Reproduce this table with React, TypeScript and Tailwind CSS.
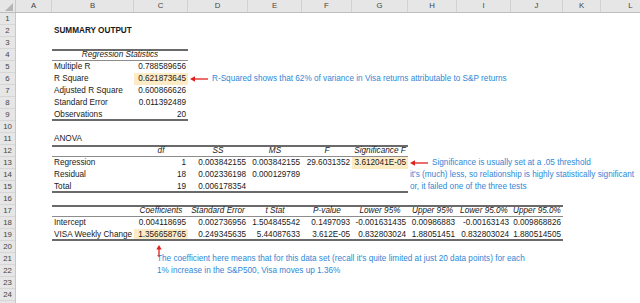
import React from "react";

const W = [36, 82, 54, 60, 54, 50, 56, 49, 54, 52, 38, 60];
const LETTERS = ["A", "B", "C", "D", "E", "F", "G", "H", "I", "J", "K", "L"];

type CellDef = {
  c: number;
  t?: React.ReactNode;
  a?: "l" | "r" | "c";
  i?: boolean;
  b?: boolean;
  hl?: boolean;
  span?: number;
  note?: boolean;
  raw?: boolean;
};

type RowDef = {
  cells?: CellDef[];
  top?: [number, number];
  bot?: [number, number];
};

const LeftArrow = () => (
  <svg width="20" height="8" viewBox="0 0 20 8" className="shrink-0">
    <line x1="5" y1="4" x2="20" y2="4" stroke="#e0201c" strokeWidth="1.3" />
    <polygon points="2,4 7,1.3 7,6.7" fill="#e0201c" />
  </svg>
);

const UpArrow = () => (
  <svg width="8" height="13" viewBox="0 0 8 13">
    <line x1="4" y1="4" x2="4" y2="13" stroke="#e0201c" strokeWidth="1.3" />
    <polygon points="4,1 1.3,5.5 6.7,5.5" fill="#e0201c" />
  </svg>
);

const num = (c: number, t: string, hl?: boolean): CellDef => ({ c, t, a: "r", hl });
const hdr = (c: number, t: string): CellDef => ({ c, t, a: "c", i: true });

const rows: RowDef[] = [
  {},
  { cells: [{ c: 1, t: "SUMMARY OUTPUT", b: true }] },
  {},
  { cells: [{ c: 1, t: "Regression Statistics", a: "c", i: true, span: 2 }], top: [1, 2] },
  { cells: [{ c: 1, t: "Multiple R" }, num(2, "0.788589656")] },
  {
    cells: [
      { c: 1, t: "R Square" },
      num(2, "0.621873645", true),
      {
        c: 3,
        raw: true,
        t: (
          <div className="flex items-center whitespace-nowrap h-full">
            <LeftArrow />
            <span className="ml-[4px] text-[#2f88d6]">
              R-Squared shows that 62% of variance in Visa returns attributable to S&amp;P returns
            </span>
          </div>
        ),
      },
    ],
  },
  { cells: [{ c: 1, t: "Adjusted R Square" }, num(2, "0.600866626")] },
  { cells: [{ c: 1, t: "Standard Error" }, num(2, "0.011392489")] },
  { cells: [{ c: 1, t: "Observations" }, num(2, "20")], bot: [1, 2] },
  {},
  { cells: [{ c: 1, t: "ANOVA" }] },
  {
    cells: [hdr(2, "df"), hdr(3, "SS"), hdr(4, "MS"), hdr(5, "F"), hdr(6, "Significance F")],
    top: [1, 6],
  },
  {
    cells: [
      { c: 1, t: "Regression" },
      num(2, "1"),
      num(3, "0.003842155"),
      num(4, "0.003842155"),
      num(5, "29.6031352"),
      num(6, "3.612041E-05", true),
      {
        c: 7,
        raw: true,
        t: (
          <div className="flex items-center whitespace-nowrap h-full">
            <LeftArrow />
            <span className="ml-[4px] text-[#2f88d6]">Significance is usually set at a .05 threshold</span>
          </div>
        ),
      },
    ],
  },
  {
    cells: [
      { c: 1, t: "Residual" },
      num(2, "18"),
      num(3, "0.002336198"),
      num(4, "0.000129789"),
      { c: 7, t: "it's (much) less, so relationship is highly statistically significant", note: true },
    ],
  },
  {
    cells: [
      { c: 1, t: "Total" },
      num(2, "19"),
      num(3, "0.006178354"),
      { c: 7, t: "or, it failed one of the three tests", note: true },
    ],
    bot: [1, 6],
  },
  {},
  {
    cells: [
      hdr(2, "Coefficients"),
      hdr(3, "Standard Error"),
      hdr(4, "t Stat"),
      hdr(5, "P-value"),
      hdr(6, "Lower 95%"),
      hdr(7, "Upper 95%"),
      hdr(8, "Lower 95.0%"),
      hdr(9, "Upper 95.0%"),
    ],
    top: [1, 9],
  },
  {
    cells: [
      { c: 1, t: "Intercept" },
      num(2, "0.004118695"),
      num(3, "0.002736956"),
      num(4, "1.504845542"),
      num(5, "0.1497093"),
      num(6, "-0.001631435"),
      num(7, "0.00986883"),
      num(8, "-0.00163143"),
      num(9, "0.009868826"),
    ],
  },
  {
    cells: [
      { c: 1, t: "VISA Weekly Change" },
      num(2, "1.356658765", true),
      num(3, "0.249345635"),
      num(4, "5.44087633"),
      num(5, "3.612E-05"),
      num(6, "0.832803024"),
      num(7, "1.88051451"),
      num(8, "0.832803024"),
      num(9, "1.880514505"),
    ],
    bot: [1, 9],
  },
  {
    cells: [
      {
        c: 2,
        raw: true,
        t: (
          <div className="relative h-full">
            <div className="absolute left-[21px] top-[3px]">
              <UpArrow />
            </div>
          </div>
        ),
      },
    ],
  },
  {
    cells: [
      {
        c: 2,
        raw: true,
        t: (
          <div className="pl-[23px] whitespace-nowrap text-[#2f88d6]">
            The coefficient here means that for this data set (recall it's quite limited at just 20 data points) for each
          </div>
        ),
      },
    ],
  },
  {
    cells: [
      {
        c: 2,
        raw: true,
        t: (
          <div className="pl-[23px] whitespace-nowrap text-[#2f88d6]">
            1% increase in the S&amp;P500, Visa moves up 1.36%
          </div>
        ),
      },
    ],
  },
  {},
  {},
];

function borderClass(row: RowDef, c: number): string {
  const inTop = row.top && c >= row.top[0] && c <= row.top[1];
  const inBot = row.bot && c >= row.bot[0] && c <= row.bot[1];
  if (inTop) return "shadow-[inset_0_2px_0_#6a6a6a,inset_0_-1px_0_#8c8c8c]";
  if (inBot) return "shadow-[inset_0_-2px_0_#6a6a6a]";
  return "";
}

function Row({ row, n }: { row: RowDef; n?: number }) {
  const out: React.ReactNode[] = [];
  let c = 0;
  while (c < W.length) {
    const def = row.cells?.find((d) => d.c === c);
    const span = def?.span ?? 1;
    let w = 0;
    for (let k = c; k < c + span; k++) w += W[k];
    const align = def?.a === "r" ? "text-right" : def?.a === "c" ? "text-center" : "text-left";
    out.push(
      <div
        key={c}
        style={{ width: w }}
        className={`shrink-0 h-[12px] leading-[12px] whitespace-nowrap overflow-visible ${
          def?.hl ? "bg-[#fdebc6]" : ""
        } ${borderClass(row, c)} ${def?.raw ? "" : "px-[2px]"} ${align} ${def?.i ? "italic" : ""} ${
          def?.b ? "font-bold" : ""
        } ${def?.note ? "text-[#2f88d6]" : ""}`}
      >
        {def?.t}
      </div>
    );
    c += span;
  }
  return (
    <div className="flex h-[12px]">
      <div className="shrink-0 w-[16px] h-[12px] leading-[12px] bg-[#e6e6e6] border-r border-[#c8c8c8] shadow-[inset_0_-1px_0_#d6d6d6] text-center text-[#444] text-[7.8px]">
        {n}
      </div>
      {out}
    </div>
  );
}

export default function App() {
  return (
    <div
      className="w-[640px] h-[303px] overflow-hidden bg-white text-[8.2px] text-[#1a1a1a]"
      style={{ fontFamily: '"Liberation Sans", Arial, sans-serif' }}
    >
      <div className="flex h-[13px] bg-[#e6e6e6] border-b border-[#bdbdbd]">
        <div className="shrink-0 w-[16px] h-[12px] border-r border-[#c8c8c8] flex items-end justify-end pr-[2px] pb-[1px]">
          <svg width="8" height="8" viewBox="0 0 8 8">
            <polygon points="8,0 8,8 0,8" fill="#b5b5b5" />
          </svg>
        </div>
        {LETTERS.map((l, i) => (
          <div
            key={l}
            style={{ width: W[i] }}
            className="shrink-0 h-[12px] leading-[12px] text-center text-[#444] text-[7.8px] border-r border-[#d2d2d2]"
          >
            {l}
          </div>
        ))}
      </div>
      {rows.map((r, i) => (
        <Row key={i} row={r} n={i + 1} />
      ))}
      <Row row={{}} />
    </div>
  );
}
